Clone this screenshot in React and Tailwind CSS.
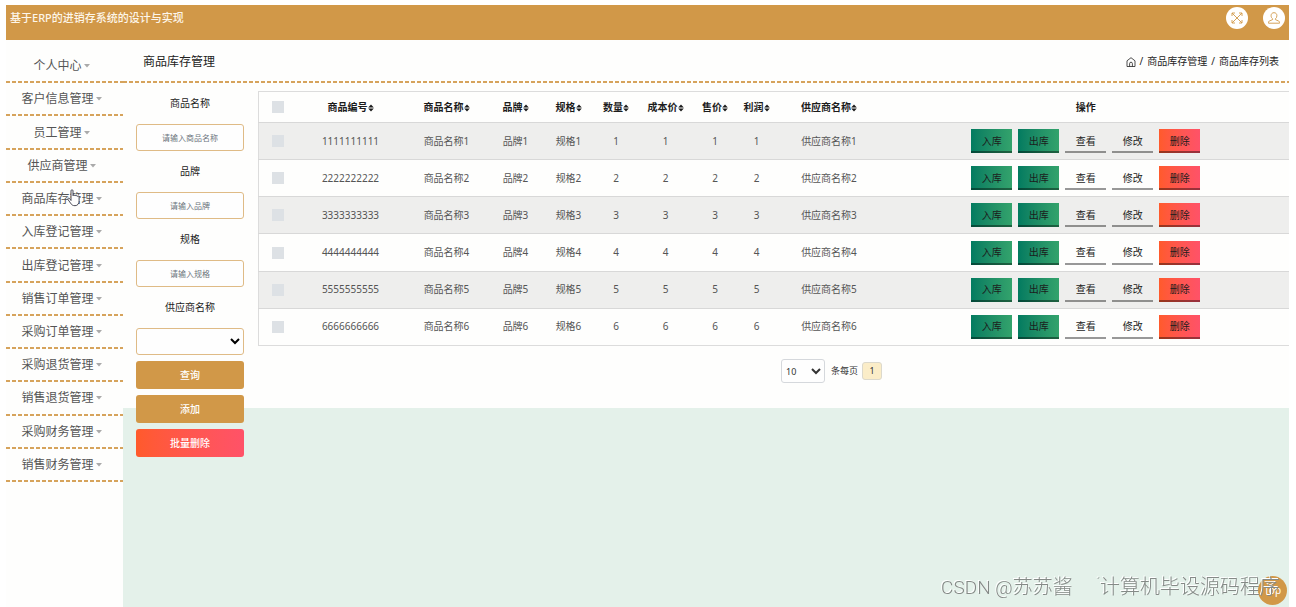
import React, { useState } from 'react';
import clsx from 'clsx';

const menus = [
    '个人中心', '客户信息管理', '员工管理', '供应商管理', '商品库存管理', '入库登记管理', '出库登记管理',
    '销售订单管理', '采购订单管理', '采购退货管理', '销售退货管理', '采购财务管理', '销售财务管理',
];

const columns = [
    { title: '商品编号', width: 'w-[106px]' },
    { title: '商品名称', width: 'w-[86px]' },
    { title: '品牌', width: 'w-[52px]' },
    { title: '规格', width: 'w-[54px]' },
    { title: '数量', width: 'w-[41px]' },
    { title: '成本价', width: 'w-[58px]' },
    { title: '售价', width: 'w-[41px]' },
    { title: '利润', width: 'w-[42px]' },
    { title: '供应商名称', width: 'w-[103px]' },
];

const rows = [1, 2, 3, 4, 5, 6].map((n) => [
    String(n).repeat(10), `商品名称${n}`, `品牌${n}`, `规格${n}`, n, n, n, n, `供应商名称${n}`,
]);

const green = 'bg-linear-to-r from-[#027b60] to-[#33a36c]';
const red = 'bg-linear-to-r from-[#ff5a2b] to-[#ff5268]';

const actions = [
    { label: '入库', style: green },
    { label: '出库', style: green },
    { label: '查看', style: '' },
    { label: '修改', style: '' },
    { label: '删除', style: red },
];

// short 4px dashes along the bottom edge
const dashed = 'bg-[repeating-linear-gradient(90deg,#d6a35c_0_4px,transparent_4px_6px)] bg-[length:100%_2px] bg-bottom bg-no-repeat';

const FullscreenIcon = () => (
    <svg viewBox="0 0 12 12" className="size-3" fill="none" stroke="currentColor" strokeWidth="0.9">
        <path d="M1 4V1h3M8 1h3v3M11 8v3H8M4 11H1V8M1 1l10 10M11 1L1 11" />
    </svg>
);

const UserIcon = () => (
    <svg viewBox="0 0 12 12" className="size-3" fill="none" stroke="currentColor" strokeWidth="0.9" strokeLinejoin="round">
        <path d="M6 .7c-1.9 0-2.9 1.3-2.9 3 0 1.300.6 2.500 1.500 3.100v.8L1.200 9.100c-.5.3-.7.7-.7 1.200v.9h11v-.9c0-.5-.2-.9-.7-1.200L7.400 7.600v-.8c.9-.6 1.500-1.800 1.500-3.100 0-1.700-1-3-2.900-3z" />
    </svg>
);

const HomeIcon = () => (
    <svg viewBox="0 0 10 10" className="size-2.5" fill="none" stroke="currentColor" strokeWidth="0.8">
        <path d="M1 9.500V3.800L5 .7l4 3.100v5.700zM3.600 9.500V6.600a1.400 1.400 0 0 1 2.800 0v2.900" />
    </svg>
);

const SortIcon = () => (
    <svg viewBox="0 0 6 8" className="inline-block w-1.5 h-2 align-middle" fill="currentColor">
        <path d="M3 .4L5.800 3.400H.2zM3 7.600L.2 4.600h5.600z" />
    </svg>
);

const HandCursor = () => (
    <svg viewBox="0 0 14 18" className="absolute left-[61px] top-1/2 -translate-y-[11px] w-3.5 h-[18px]" fill="#fefefe" stroke="#4a4a56" strokeWidth="1" strokeLinejoin="round">
        <path d="M4 11.500V1.800c0-1.400 2-1.400 2 0v5c.2-.9 1.900-.9 2.100.2.300-.8 1.900-.7 2.100.4.400-.7 1.900-.5 1.900.7v3.700c0 2.700-1.400 4.900-4.100 4.900-2.300 0-3.500-1-4.400-2.500L1 10.600c-.7-1.100.7-2 1.600-1.200z" />
    </svg>
);

const Field = ({ id, label, children }) => (
    <div className="flex flex-col">
        <label htmlFor={id} className="h-[41px] leading-[41px] text-center text-[#222]">{label}</label>
        {children}
    </div>
);

const control = 'h-[27px] w-full rounded-[3px] border border-[#dfbb86] bg-[#fefefe]';

const Filters = () => (
    // zero height: the buttons may run past the white panel
    <form className="w-27 h-0 shrink-0" onSubmit={(e) => e.preventDefault()}>
        <Field id="name" label="商品名称">
            <input id="name" className={clsx(control, 'text-center text-[8px] placeholder:text-[#6c757d]')} placeholder="请输入商品名称" />
        </Field>
        <Field id="brand" label="品牌">
            <input id="brand" className={clsx(control, 'text-center text-[8px] placeholder:text-[#6c757d]')} placeholder="请输入品牌" />
        </Field>
        <Field id="spec" label="规格">
            <input id="spec" className={clsx(control, 'text-center text-[8px] placeholder:text-[#6c757d]')} placeholder="请输入规格" />
        </Field>
        <Field id="supplier" label="供应商名称">
            <select id="supplier" className={control}>
                <option></option>
            </select>
        </Field>
        <div className="mt-1.5 flex flex-col gap-1.5 font-medium text-white">
            <button type="submit" className="h-7 rounded-[3px] bg-[#d19848]">查询</button>
            <button type="button" className="h-7 rounded-[3px] bg-[#d19848]">添加</button>
            <button type="button" className={clsx('h-7 rounded-[3px]', red)}>批量删除</button>
        </div>
    </form>
);

const Check = ({ label, checked, onChange }) => (
    <input
        type="checkbox"
        aria-label={label}
        checked={checked}
        onChange={onChange}
        className="block mx-auto size-3 appearance-none bg-[#dde1e5] checked:bg-[#d19848]"
    />
);

const StockTable = () => {
    const [selected, setSelected] = useState([]);

    const toggle = (id) =>
        setSelected(selected.includes(id) ? selected.filter((s) => s !== id) : [...selected, id]);

    const toggleAll = () =>
        setSelected(selected.length === rows.length ? [] : rows.map((r) => r[0]));

    return (
        <table className="w-full h-[255px] table-fixed border-collapse border-y border-l border-[#dcdcdc] text-center">
            <thead>
                <tr className="h-[31px] text-[#1c1c1c]">
                    <th className="w-[39px]">
                        <Check label="全选" checked={selected.length === rows.length} onChange={toggleAll} />
                    </th>
                    {columns.map((c) => (
                        <th key={c.title} className={clsx(c.width, 'font-bold whitespace-nowrap')}>
                            {c.title}<SortIcon />
                        </th>
                    ))}
                    <th className="pl-0.5 font-bold">操作</th>
                </tr>
            </thead>
            <tbody className="text-[#555]">
                {rows.map((row) => (
                    <tr key={row[0]} className="border-t border-[#d8d8d8] odd:bg-[#eeeeed]">
                        <td>
                            <Check label={row[0]} checked={selected.includes(row[0])} onChange={() => toggle(row[0])} />
                        </td>
                        {row.map((cell, i) => (
                            <td key={i} className="whitespace-nowrap">{cell}</td>
                        ))}
                        <td className="pl-0.5">
                            <div className="flex justify-center gap-1.5">
                                {actions.map((a) => (
                                    <button key={a.label} type="button" className={clsx('w-[41px] h-6 pt-0.5 border-b-2 border-black/40 bg-origin-border text-[#1c1c1c]', a.style)}>
                                        {a.label}
                                    </button>
                                ))}
                            </div>
                        </td>
                    </tr>
                ))}
            </tbody>
        </table>
    );
};

const Pagination = () => (
    <div className="mt-[13px] pl-[116px] flex items-center justify-center text-[9px] text-[#333]">
        <select id="size" defaultValue="10" className="w-11 h-6 rounded-[3px] border border-[#d5d8dc] bg-[#fefefe]">
            <option>10</option>
            <option>20</option>
            <option>50</option>
        </select>
        <label htmlFor="size" className="ml-1.5 mr-1">条每页</label>
        <button type="button" className="w-5 h-[18px] rounded-[3px] border border-[#dcd9cc] bg-[#fbedc8]">1</button>
    </div>
);

const App = () => {
    return (
        <div className="min-h-screen flex flex-col bg-white pt-[5px] pl-1.5 pr-[7px] text-[10px] font-['Noto_Sans','Noto_Sans_CJK_SC',sans-serif]">
            <header className="h-[35px] pt-px pb-2.5 pl-1 pr-1 flex items-center justify-between bg-[#d19848]">
                <h1 className="text-[11px] font-medium text-[#fdf6ea]">基于ERP的进销存系统的设计与实现</h1>
                <div className="flex gap-[15px] text-[#d19848]">
                    <button type="button" aria-label="全屏" className="size-[22px] rounded-full bg-white flex items-center justify-center">
                        <FullscreenIcon />
                    </button>
                    <button type="button" aria-label="用户" className="size-[22px] rounded-full bg-white flex items-center justify-center">
                        <UserIcon />
                    </button>
                </div>
            </header>

            <div className="flex grow">
                <nav className="w-[117px] shrink-0 bg-[#fefefd]">
                    <ul className="pt-2.5 min-h-[442px] flex flex-col text-xs text-[#555]">
                        {menus.map((m) => (
                            <li key={m} className={clsx('relative flex-1 flex pb-px', dashed)}>
                                <a href="#" className="grow flex items-center justify-center pr-1.5">
                                    {m}
                                    <svg viewBox="0 0 6 4" className="ml-0.5 w-1.5 h-1" fill="#aaa">
                                        <path d="M0 0h6L3 3.500z" />
                                    </svg>
                                </a>
                                {m === '商品库存管理' && <HandCursor />}
                            </li>
                        ))}
                    </ul>
                </nav>

                <main className="grow min-w-0 bg-[#e4f1ea]">
                    <div className="bg-[#fefefd] pb-[25px]">
                        <div className={clsx('h-[43px] pt-0.5 pb-0.5 pl-5 pr-2.5 flex items-center justify-between text-[#222]', dashed)}>
                            <h2 className="text-xs">商品库存管理</h2>
                            <div className="flex items-center gap-1">
                                <a href="#" aria-label="首页"><HomeIcon /></a>
                                <span>/</span>
                                <a href="#">商品库存管理</a>
                                <span>/</span>
                                <span>商品库存列表</span>
                            </div>
                        </div>
                        <div className="pl-[13px] flex items-start gap-3.5">
                            <Filters />
                            <div className="grow min-w-0 pt-2">
                                <StockTable />
                                <Pagination />
                            </div>
                        </div>
                    </div>
                </main>
            </div>

            <button type="button" className="fixed right-[9px] bottom-0.5 size-[29px] rounded-full bg-[#d19848] text-[10px] text-white">
                Top
            </button>
            <div className="fixed right-4 bottom-[5px] flex items-baseline text-xl leading-7 text-[#858a87] pointer-events-none font-['Noto_Sans_CJK_SC',sans-serif] [text-shadow:-1px_-1px_0_#fff]">
                <span className="mr-6 font-light"><span className="font-['Roboto'] text-[19px]">CSDN @</span>苏苏酱</span>
                <span className="self-start text-[10px] leading-5 font-['Roboto']">ˊ</span>
                <span className="font-light">计算机毕设源码程序</span>
            </div>
        </div>
    );
};

export default App;
